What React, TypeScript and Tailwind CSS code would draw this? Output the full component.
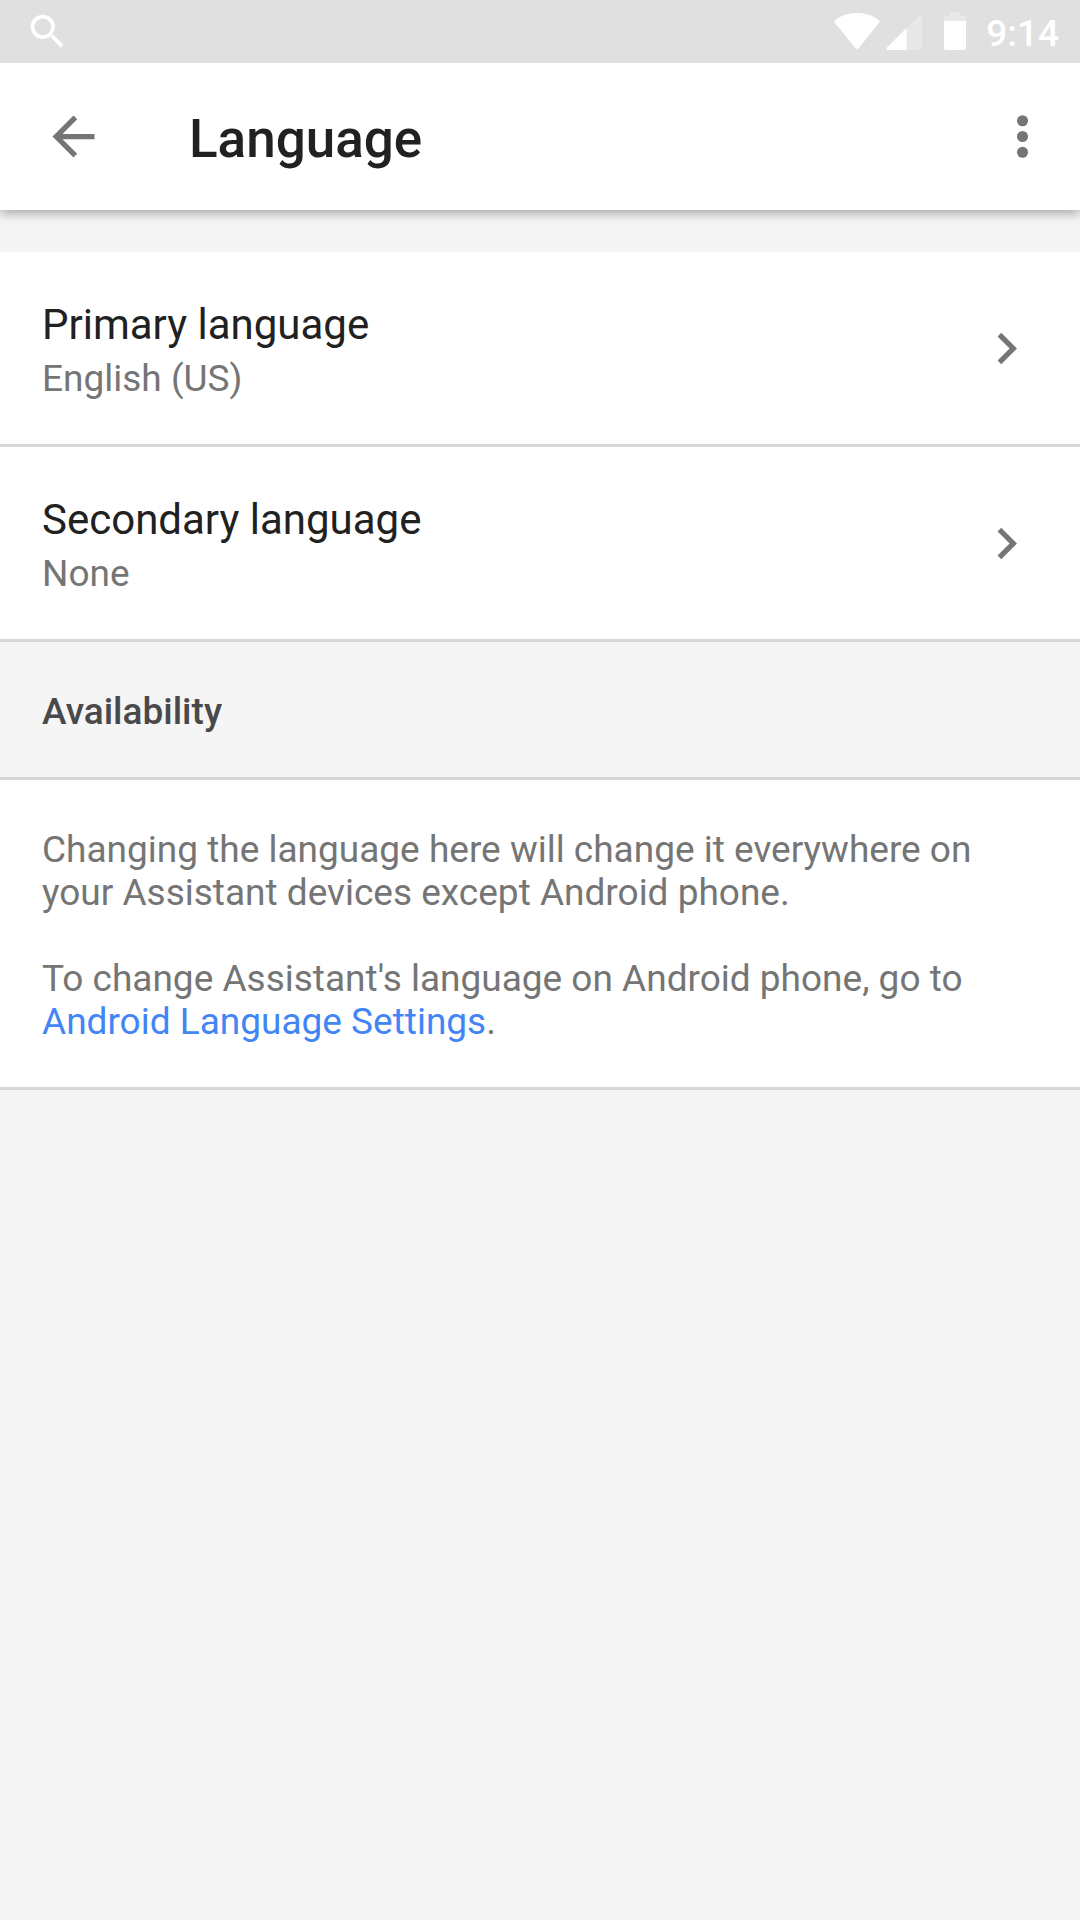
import React from "react";

function SearchIcon() {
  return (
    <svg viewBox="0 0 24 24" className="size-[45px]" fill="currentColor" aria-hidden="true">
      <path d="M15.5 14h-.79l-.28-.27A6.471 6.471 0 0 0 16 9.5 6.5 6.5 0 1 0 9.5 16c1.61 0 3.09-.59 4.23-1.57l.27.28v.79l5 4.99L20.49 19l-4.99-5zm-6 0C7.01 14 5 11.99 5 9.5S7.01 5 9.5 5 14 7.01 14 9.5 11.99 14 9.5 14z" />
    </svg>
  );
}

function WifiIcon() {
  return (
    <svg viewBox="0 0 46 38" className="h-[38px] w-[46px]" fill="currentColor" aria-hidden="true">
      <path d="M1.2 8.2C7.2 3.2 14.7 1 23 1s15.8 2.2 21.8 7.2c.9.8 1 1.7.3 2.6L24.600 36.2c-.9 1.100-2.300 1.100-3.200 0L.9 10.800c-.7-.9-.6-1.800.3-2.600z" />
    </svg>
  );
}

function SignalIcon() {
  return (
    <svg viewBox="0 0 36 38" className="h-[38px] w-9" fill="currentColor" aria-hidden="true">
      <path
        opacity="0.25"
        d="M34 2.900 1 35.600c-.8.900-.4 2.400 1 2.400h32c1.200 0 2-.8 2-2V3.600c0-1.300-1.200-1.600-2-.7z"
      />
      <path d="M20.500 15.900.900 35.500c-.9 1-.4 2.500 1.100 2.500h18.500z" />
    </svg>
  );
}

function BatteryIcon() {
  return (
    <svg viewBox="0 0 22 38" className="h-[38px] w-[22px]" fill="currentColor" aria-hidden="true">
      <path opacity="0.25" d="M6 0h10v4h4c1.200 0 2 .8 2 2v3H0V6c0-1.200.8-2 2-2h4z" />
      <path d="M0 9h22v27c0 1.200-.8 2-2 2H2c-1.200 0-2-.8-2-2z" />
    </svg>
  );
}

function StatusBar() {
  return (
    <div className="relative z-20 flex h-[63px] items-start justify-between bg-[#e0e0e0] pr-[21px] pl-[25px] text-white">
      <div className="pt-[9px]">
        <SearchIcon />
      </div>
      <div className="flex items-start pt-3">
        <WifiIcon />
        <div className="ml-[6px]">
          <SignalIcon />
        </div>
        <div className="ml-[22px]">
          <BatteryIcon />
        </div>
        <time className="ml-5 text-[37px] leading-[43px] font-medium">9:14</time>
      </div>
    </div>
  );
}

function AppBar() {
  return (
    <header className="relative z-10 flex h-[147px] items-center bg-white pr-[26px] pl-[42px] shadow-[0_4px_10px_rgba(0,0,0,0.3)]">
      <button type="button" aria-label="Back" className="text-[#757575]">
        <svg viewBox="0 0 24 24" className="size-[63px]" fill="currentColor" aria-hidden="true">
          <path d="M20 11H7.830l5.590-5.590L12 4l-8 8 8 8 1.410-1.410L7.830 13H20v-2z" />
        </svg>
      </button>
      <h1 className="ml-21 flex-1 pt-1 text-[53px] leading-[62px] font-medium text-[#212121]">Language</h1>
      <button type="button" aria-label="More options" className="text-[#757575]">
        <svg viewBox="0 0 24 24" className="size-[63px]" fill="currentColor" aria-hidden="true">
          <circle cx="12" cy="6" r="2.100" />
          <circle cx="12" cy="12" r="2.100" />
          <circle cx="12" cy="18" r="2.100" />
        </svg>
      </button>
    </header>
  );
}

function LanguageRow({ title, value }: { title: string; value: string }) {
  return (
    <button
      type="button"
      className="flex w-full items-center justify-between border-b-3 border-[#d6d6d6] bg-white px-[42px] text-left"
    >
      <span className="flex flex-col gap-2 pt-12 pb-11">
        <span className="text-[42px] leading-[49px] text-[#212121]">{title}</span>
        <span className="text-[37px] leading-[43px] text-[#757575]">{value}</span>
      </span>
      <svg viewBox="0 0 24 24" className="size-[63px] text-[#757575]" fill="currentColor" aria-hidden="true">
        <path d="M10 6 8.590 7.410 13.170 12l-4.580 4.590L10 18l6-6z" />
      </svg>
    </button>
  );
}

export default function App() {
  return (
    <div className="min-h-screen bg-[#f5f5f5] font-[Roboto,sans-serif]">
      <StatusBar />
      <AppBar />
      <main className="pt-[42px]">
        <LanguageRow title="Primary language" value="English (US)" />
        <LanguageRow title="Secondary language" value="None" />
        <h2 className="border-b-3 border-[#d6d6d6] px-[42px] pt-12 pb-11 text-[37px] leading-[43px] font-medium text-[#494949]">
          Availability
        </h2>
        <section className="flex flex-col gap-[43px] border-b-3 border-[#d6d6d6] bg-white px-[42px] pt-12 pb-11 text-[37px] leading-[43px] text-[#757575]">
          <p>Changing the language here will change it everywhere on your Assistant devices except Android phone.</p>
          <p>
            To change Assistant's language on Android phone, go to{" "}
            <a href="#language-settings" className="text-[#4285f4]">
              Android Language Settings
            </a>
            .
          </p>
        </section>
      </main>
    </div>
  );
}
